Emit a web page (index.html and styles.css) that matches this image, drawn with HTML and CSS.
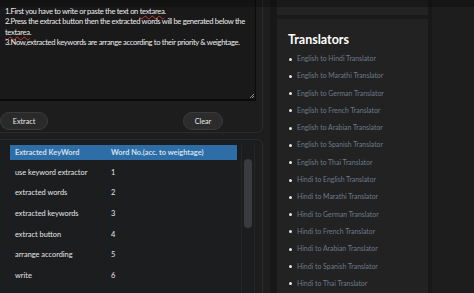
FILE: index.html
```html
<!DOCTYPE html>
<html>
<head>
<meta charset="utf-8">
<link rel="stylesheet" href="styles.css">
</head>
<body>
<div class="page">
  <div class="left">
    <div class="card input-card">
      <div class="textarea">
        <div>1.First you have to write or paste the text on <span class="sp">textarea</span>.</div>
        <div>2.Press the extract button then the extracted words will be generated below the <span class="sp">textarea</span>.</div>
        <div>3.Now,extracted keywords are arrange according to their priority &amp; weightage.</div>
        <span class="grip"></span>
      </div>
      <div class="buttons">
        <button class="btn">Extract</button>
        <button class="btn clear">Clear</button>
      </div>
    </div>
    <div class="card table-card">
      <div class="table-wrap">
        <div class="thead">
          <span class="c1">Extracted KeyWord</span><span class="c2">Word No.(acc. to weightage)</span>
        </div>
        <div class="row"><span class="c1">use keyword extractor</span><span class="c2">1</span></div>
        <div class="row"><span class="c1">extracted words</span><span class="c2">2</span></div>
        <div class="row"><span class="c1">extracted keywords</span><span class="c2">3</span></div>
        <div class="row"><span class="c1">extract button</span><span class="c2">4</span></div>
        <div class="row"><span class="c1">arrange according</span><span class="c2">5</span></div>
        <div class="row"><span class="c1">write</span><span class="c2">6</span></div>
      </div>
      <div class="scroll"><div class="thumb"></div></div>
    </div>
  </div>
  <div class="sep"></div>
  <div class="right">
    <div class="top-strip"></div>
    <div class="panel">
      <h2>Translators</h2>
      <ul>
        <li>English to Hindi Translator</li>
        <li>English to Marathi Translator</li>
        <li>English to German Translator</li>
        <li>English to French Translator</li>
        <li>English to Arabian Translator</li>
        <li>English to Spanish Translator</li>
        <li>English to Thai Translator</li>
        <li>Hindi to English Translator</li>
        <li>Hindi to Marathi Translator</li>
        <li>Hindi to German Translator</li>
        <li>Hindi to French Translator</li>
        <li>Hindi to Arabian Translator</li>
        <li>Hindi to Spanish Translator</li>
        <li>Hindi to Thai Translator</li>
      </ul>
    </div>
  </div>
  <div class="rest"></div>
  <div class="top-shade"></div>
</div>
</body>
</html>
```
FILE: styles.css
```css
html, body {
  margin: 0;
  padding: 0;
  background: #1e1e1e;
  font-family: Lato, "Open Sans", sans-serif;
  overflow: hidden;
}
.page {
  position: relative;
  display: flex;
  width: 474px;
  height: 293px;
  overflow: hidden;
}
.top-shade {
  position: absolute;
  left: 0;
  top: 0;
  width: 474px;
  height: 7px;
  background: rgba(10, 10, 10, 0.35);
}
.left {
  width: 263px;
  flex: none;
  display: flex;
  flex-direction: column;
  gap: 6px;
}
.card {
  border: 1px solid #2b2b2b;
  border-left: none;
  border-radius: 0 0 6px 0;
  background: #1d1d1d;
}
.input-card {
  height: 133px;
  box-sizing: border-box;
  border-top: none;
  display: flex;
  flex-direction: column;
}
.textarea {
  position: relative;
  width: 256px;
  height: 101px;
  box-sizing: border-box;
  background: #1a191a;
  border-right: 1px solid #0b0b0b;
  border-bottom: 2px solid #0b0b0b;
  color: #ececec;
  font-size: 7.6px;
  letter-spacing: -0.33px;
  line-height: 10.4px;
  padding: 6px 4px 0 5px;
}
.sp {
  text-decoration: underline wavy #c0392b;
  text-decoration-thickness: 1px;
  text-underline-offset: 1px;
}
.grip {
  position: absolute;
  right: 1px;
  bottom: 1px;
  width: 4px;
  height: 4px;
  background: linear-gradient(135deg, transparent 50%, #8a8a8a 50%, #8a8a8a 60%, transparent 60%, transparent 75%, #8a8a8a 75%, #8a8a8a 85%, transparent 85%);
}
.buttons {
  display: flex;
  padding-top: 11px;
}
.btn {
  height: 18px;
  box-sizing: border-box;
  background: #2a2a2a;
  border: 1px solid #3a3a3a;
  border-radius: 9px;
  color: #e8e8e8;
  font-family: Lato, "Open Sans", sans-serif;
  font-size: 7.2px;
  padding: 0;
  width: 48px;
}
.btn.clear {
  width: 40px;
  margin-left: 135px;
  background: #2c2c2c;
}
.table-card {
  flex: 1;
  display: flex;
  padding: 5px 0 0 10px;
  border-bottom: none;
  border-radius: 0 6px 0 0;
  background: #1c1d1f;
}
.table-wrap {
  width: 227px;
  font-size: 7.4px;
  color: #e6e6e6;
}
.thead {
  background: #2f6da6;
  height: 15px;
  display: flex;
  align-items: center;
  color: #cfe0f0;
  font-weight: 700;
}
.row {
  height: 20.6px;
  display: flex;
  align-items: center;
}
.thead + .row { margin-top: 2px; }
.c1 {
  width: 96px;
  padding-left: 5px;
}
.scroll {
  width: 12px;
  margin-left: 4px;
  border-left: 1px solid #262626;
  border-right: 1px solid #262626;
  padding-top: 14px;
}
.thumb {
  width: 8px;
  height: 69px;
  margin: 0 auto;
  background: #3a3b3e;
  border-radius: 4px;
}
.sep {
  width: 14px;
  flex: none;
  background: linear-gradient(90deg, #1e1e1e 0 7px, #181818 7px 14px);
}
.right {
  width: 151px;
  flex: none;
  display: flex;
  flex-direction: column;
  gap: 4px;
  background: #1a1a1a;
}
.top-strip {
  height: 15px;
  background: #232323;
}
.panel {
  flex: 1;
  background: #222222;
  padding: 13px 0 0 11px;
}
.panel h2 {
  margin: 0 0 2px 0;
  color: #ffffff;
  font-size: 12.5px;
  font-weight: 700;
  line-height: 16px;
}
.panel ul {
  margin: 0;
  padding: 0 0 0 9px;
  list-style: none;
}
.panel li {
  position: relative;
  color: #6b7a8a;
  font-size: 6.9px;
  line-height: 17.3px;
  height: 17.3px;
}
.panel li::before {
  content: "";
  position: absolute;
  left: -8px;
  top: 7.5px;
  width: 3px;
  height: 3px;
  border-radius: 50%;
  background: #e8e8e8;
}
.rest {
  flex: 1;
  background: linear-gradient(90deg, #181818 0 4px, #1e1d1d 4px);
}
```
